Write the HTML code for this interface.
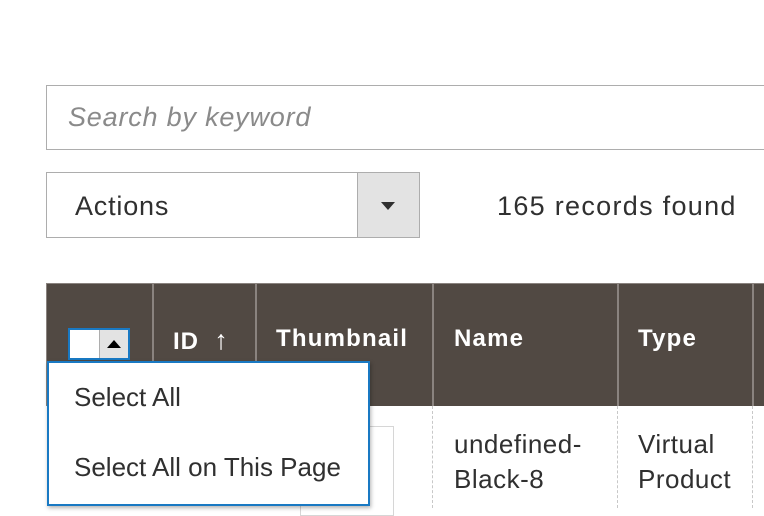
<!DOCTYPE html>
<html><head><style>
*{box-sizing:border-box;margin:0;padding:0}
body{width:764px;height:508px;overflow:hidden;background:#fff;font-family:"Liberation Sans",sans-serif;color:#303030;position:relative}
.abs{position:absolute}
</style></head><body>
<div class="abs" style="left:46px;top:85px;width:740px;height:65px;border:1px solid #adadad;"></div>
<div class="abs" style="left:68px;top:102px;font-size:27px;font-style:italic;color:#8a8a8a;letter-spacing:0.8px">Search by keyword</div>

<div class="abs" style="left:46px;top:172px;width:374px;height:66px;border:1px solid #adadad;"></div>
<div class="abs" style="left:75px;top:191px;font-size:27px;color:#303030;letter-spacing:0.8px">Actions</div>
<div class="abs" style="left:357px;top:173px;width:62px;height:64px;background:#e3e3e3;border-left:1px solid #adadad;"></div>
<div class="abs" style="left:381px;top:202px;width:0;height:0;border-left:7px solid transparent;border-right:7px solid transparent;border-top:8px solid #303030;"></div>
<div class="abs" style="left:497px;top:191px;font-size:27px;color:#303030;letter-spacing:1.3px">165 records found</div>

<div class="abs" style="left:46px;top:283px;width:720px;height:123px;background:#514943;border:1px solid #8a837f;border-bottom:none"></div>
<div class="abs" style="left:152px;top:283px;width:2px;height:123px;background:#8a837f"></div>
<div class="abs" style="left:255px;top:283px;width:2px;height:123px;background:#8a837f"></div>
<div class="abs" style="left:432px;top:283px;width:2px;height:123px;background:#8a837f"></div>
<div class="abs" style="left:617px;top:283px;width:2px;height:123px;background:#8a837f"></div>
<div class="abs" style="left:752px;top:283px;width:2px;height:123px;background:#8a837f"></div>
<div class="abs" style="left:173px;top:325px;font-size:24px;font-weight:bold;color:#fff;letter-spacing:1px">ID&nbsp;&nbsp;<span style="font-weight:normal;font-size:27px">↑</span></div>
<div class="abs" style="left:276px;top:325px;font-size:24px;font-weight:bold;color:#fff;letter-spacing:1.2px">Thumbnail</div>
<div class="abs" style="left:454px;top:325px;font-size:24px;font-weight:bold;color:#fff;letter-spacing:1.2px">Name</div>
<div class="abs" style="left:638px;top:325px;font-size:24px;font-weight:bold;color:#fff;letter-spacing:1.2px">Type</div>

<div class="abs" style="left:432px;top:406px;height:102px;border-left:1px dashed #c8c8c8"></div>
<div class="abs" style="left:617px;top:406px;height:102px;border-left:1px dashed #c8c8c8"></div>
<div class="abs" style="left:752px;top:406px;height:102px;border-left:1px dashed #c8c8c8"></div>
<div class="abs" style="left:300px;top:426px;width:94px;height:90px;border:1px solid #d6d6d6"></div>
<div class="abs" style="left:454px;top:427px;font-size:26px;line-height:35px;color:#303030;letter-spacing:0.5px">undefined-<br>Black-8</div>
<div class="abs" style="left:638px;top:427px;font-size:26px;line-height:35px;color:#303030;letter-spacing:0.5px">Virtual<br>Product</div>

<div class="abs" style="left:68px;top:328px;width:62px;height:32px;border:2px solid #1979c3;background:#fff"></div>
<div class="abs" style="left:99px;top:330px;width:29px;height:28px;background:#e3e3e3;border-left:1px solid #adadad"></div>
<div class="abs" style="left:107px;top:340px;width:0;height:0;border-left:7px solid transparent;border-right:7px solid transparent;border-bottom:8px solid #000"></div>

<div class="abs" style="left:47px;top:361px;width:323px;height:145px;background:#fff;border:2px solid #1979c3;box-shadow:1px 2px 4px rgba(0,0,0,.3)"></div>
<div class="abs" style="left:74px;top:382px;font-size:26px;color:#303030;">Select All</div>
<div class="abs" style="left:74px;top:452px;font-size:26px;color:#303030;">Select All on This Page</div>
</body></html>
